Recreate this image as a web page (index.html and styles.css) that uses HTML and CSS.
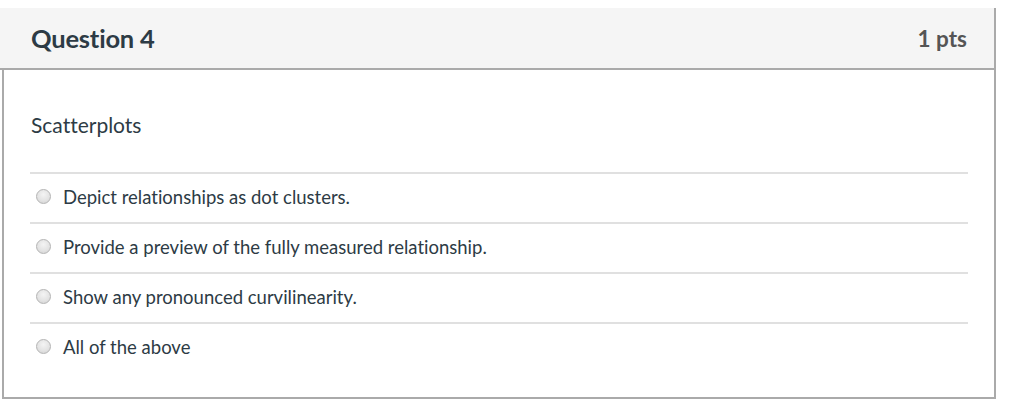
FILE: index.html
```html
<!DOCTYPE html>
<html>
<head>
<meta charset="utf-8">
<link rel="stylesheet" href="styles.css">
</head>
<body>
<div class="card">
  <div class="header">
    <h2 class="title">Question 4</h2>
    <div class="pts">1 pts</div>
  </div>
  <div class="content">
    <p class="prompt">Scatterplots</p>
    <ul class="answers">
      <li class="answer"><span class="radio"></span><span>Depict relationships as dot clusters.</span></li>
      <li class="answer"><span class="radio"></span><span>Provide a preview of the fully measured relationship.</span></li>
      <li class="answer"><span class="radio"></span><span>Show any pronounced curvilinearity.</span></li>
      <li class="answer"><span class="radio"></span><span>All of the above</span></li>
    </ul>
  </div>
</div>
</body>
</html>
```
FILE: styles.css
```css
html, body {
  margin: 0;
  padding: 0;
  background: #fff;
  font-family: Lato, "Open Sans", sans-serif;
  color: #2d3b45;
  font-variant-ligatures: none;
}
.card {
  margin-top: 8px;
  width: 996px;
}
.header {
  display: flex;
  align-items: center;
  justify-content: space-between;
  background: #f5f5f5;
  border-right: 2px solid #aaa;
  border-bottom: 2px solid #aaa;
  padding: 0 27px 0 31px;
  box-sizing: border-box;
  height: 62px;
}
.title {
  margin: 0;
  font-size: 25.5px;
  font-weight: 700;
  color: #2d3b45;
  letter-spacing: -0.2px;
}
.pts {
  font-size: 22.5px;
  font-weight: 700;
  color: #555;
}
.content {
  margin-left: 2px;
  border-left: 2px solid #aaa;
  border-right: 2px solid #aaa;
  border-bottom: 2px solid #aaa;
  padding: 0 26px;
  height: 329px;
  box-sizing: border-box;
}
.prompt {
  margin: 0;
  padding-top: 42px;
  height: 60px;
  font-size: 21px;
  line-height: 26px;
  padding-left: 1px;
  box-sizing: content-box;
}
.answers {
  list-style: none;
  margin: 0;
  padding: 0;
}
.answer {
  display: flex;
  align-items: center;
  height: 45px;
  padding-bottom: 3px;
  border-top: 2px solid #e0e0e0;
  font-size: 18.5px;
}
.radio {
  width: 13px;
  height: 13px;
  border-radius: 50%;
  border: 1px solid #b4b4b4;
  background: radial-gradient(circle at 50% 35%, #f4f4f4 0%, #e2e2e2 60%, #cfcfcf 100%);
  margin-left: 6px;
  margin-right: 12px;
  flex: none;
}
```
